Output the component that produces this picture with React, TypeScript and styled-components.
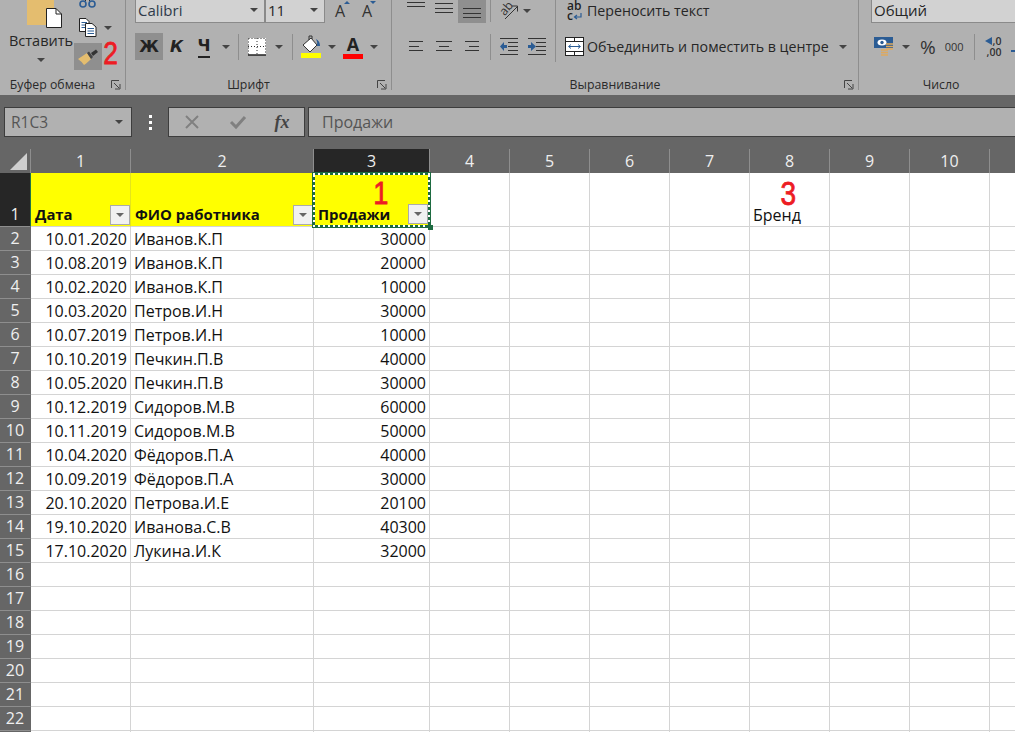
import React from 'react';
import styled, { createGlobalStyle } from 'styled-components';

const rows = [
  ['10.01.2020', 'Иванов.К.П', '30000'],
  ['10.08.2019', 'Иванов.К.П', '20000'],
  ['10.02.2020', 'Иванов.К.П', '10000'],
  ['10.03.2020', 'Петров.И.Н', '30000'],
  ['10.07.2019', 'Петров.И.Н', '10000'],
  ['10.10.2019', 'Печкин.П.В', '40000'],
  ['10.05.2020', 'Печкин.П.В', '30000'],
  ['10.12.2019', 'Сидоров.М.В', '60000'],
  ['10.11.2019', 'Сидоров.М.В', '50000'],
  ['10.04.2020', 'Фёдоров.П.А', '40000'],
  ['10.09.2019', 'Фёдоров.П.А', '30000'],
  ['20.10.2020', 'Петрова.И.Е', '20100'],
  ['19.10.2020', 'Иванова.С.В', '40300'],
  ['17.10.2020', 'Лукина.И.К', '32000'],
];

const columns = [1, 2, 3, 4, 5, 6, 7, 8, 9, 10, 11];

function App() {
  return (
    <Page>
      <GlobalStyle />
      <Ribbon>
        <Group $w={126}>
          <ClipboardBody>
            <PasteColumn>
              <PasteIcon />
              <PasteLabel>Вставить</PasteLabel>
              <PasteCaret />
            </PasteColumn>
            <ToolsColumn>
              <ScissorsIcon />
              <CopyRow>
                <CopyIcon />
                <Caret />
              </CopyRow>
              <ToolButton $w={28} $h={27} $active>
                <BrushIcon />
              </ToolButton>
            </ToolsColumn>
          </ClipboardBody>
          <Mark $left={102} $top={43} $size={31}>2</Mark>
          <GroupLabel $shift={-10}>Буфер обмена</GroupLabel>
          <Launcher />
        </Group>

        <Group $w={266}>
          <ToolRows $pad={9}>
            <ToolRow $h={24} $top>
              <SelectBox $w={130}>
                <SelectValue $blue>Calibri</SelectValue>
                <Caret />
              </SelectBox>
              <SelectBox $w={60}>
                <SelectValue>11</SelectValue>
                <Caret />
              </SelectBox>
              <Slot $w={28} $ml={1}>
                <GrowFont>A</GrowFont>
                <GrowArrow viewBox="0 0 8 4"><path d="M0 4 L4 0 L8 4 Z" fill="#2b5c94" /></GrowArrow>
              </Slot>
              <Slot $w={26}>
                <GrowFont>A</GrowFont>
                <GrowArrow viewBox="0 0 8 4"><path d="M0 0 L4 4 L8 0 Z" fill="#2b5c94" /></GrowArrow>
              </Slot>
            </ToolRow>
            <ToolRow $h={27} $mt={9}>
              <ToolButton $w={28} $h={27} $active><StyleLetter>Ж</StyleLetter></ToolButton>
              <Slot $w={27}><StyleLetter $italic>К</StyleLetter></Slot>
              <Slot $w={28}><StyleLetter $under>Ч</StyleLetter></Slot>
              <Slot $w={16}><Caret /></Slot>
              <Separator $ml={4} $mr={9} />
              <BordersIcon />
              <Slot $w={26}><Caret /></Slot>
              <Separator $mr={8} />
              <FillIcon />
              <Slot $w={22}><Caret /></Slot>
              <FontColor>
                <FontColorLetter>A</FontColorLetter>
              </FontColor>
              <Slot $w={22}><Caret /></Slot>
            </ToolRow>
          </ToolRows>
          <GroupLabel $shift={-10}>Шрифт</GroupLabel>
          <Launcher />
        </Group>

        <Group $w={467}>
          <ToolRows $pad={0}>
            <ToolRow $h={24} $top>
              <Slot $w={18} $ml={15}><LinesIcon widths={[18, 18, 18]} y={-8} /></Slot>
              <Slot $w={18} $ml={10}><LinesIcon widths={[18, 18, 18]} y={-2} /></Slot>
              <ActiveCorner>
                <LinesIcon widths={[18, 18, 18]} y={2} />
              </ActiveCorner>
              <Separator $ml={4} $mr={9} $h={22} />
              <OrientationIcon />
              <Slot $w={17}><Caret /></Slot>
              <Separator $ml={20} $mr={11} $h={62} />
              <WrapIcon />
              <RibbonText $ml={4}>Переносить текст</RibbonText>
            </ToolRow>
            <ToolRow $h={27} $mt={9}>
              <Slot $w={28} $ml={10}><LinesIcon widths={[14, 10, 14]} align="left" /></Slot>
              <Slot $w={28}><LinesIcon widths={[16, 10, 16]} align="center" /></Slot>
              <Slot $w={28}><LinesIcon widths={[14, 10, 14]} align="right" /></Slot>
              <Separator $ml={4} $mr={9} />
              <IndentIcon />
              <IndentIcon $ml={10} $reverse />
              <Slot $w={19} />
              <MergeIcon />
              <RibbonText $ml={3}>Объединить и поместить в центре</RibbonText>
              <Slot $w={28}><Caret /></Slot>
            </ToolRow>
          </ToolRows>
          <GroupLabel $shift={-10}>Выравнивание</GroupLabel>
          <Launcher />
        </Group>

        <NumberGroup>
          <ToolRows $pad={12}>
            <ToolRow $h={24} $top>
              <SelectBox $w={160}>
                <SelectValue>Общий</SelectValue>
              </SelectBox>
            </ToolRow>
            <ToolRow $h={27} $mt={9}>
              <MoneyIcon />
              <Slot $w={24}><Caret /></Slot>
              <Percent>%</Percent>
              <Thousands>000</Thousands>
              <Separator $ml={10} $mr={10} />
              <DecimalStack>
                <DecimalLine><DecimalArrow />,0</DecimalLine>
                <DecimalLine>,00</DecimalLine>
              </DecimalStack>
              <CutArrow />
            </ToolRow>
          </ToolRows>
          <GroupLabel $shift={4}>Число</GroupLabel>
        </NumberGroup>
      </Ribbon>

      <FormulaBand>
        <NameBox>
          <NameText>R1C3</NameText>
          <Caret />
        </NameBox>
        <Grip><i /><i /><i /></Grip>
        <FormulaButtons>
          <Slot $w={45}>
            <svg width="16" height="16" viewBox="0 0 16 16"><path d="M2 2 L14 14 M14 2 L2 14" stroke="#808080" strokeWidth="2" /></svg>
          </Slot>
          <Slot $w={47}>
            <svg width="18" height="16" viewBox="0 0 18 16"><path d="M2 8 L7 13 L16 3" fill="none" stroke="#808080" strokeWidth="3" /></svg>
          </Slot>
          <Slot $w={42}><FxText>fx</FxText></Slot>
        </FormulaButtons>
        <FormulaInput>Продажи</FormulaInput>
      </FormulaBand>

      <Sheet>
        <Corner>
          <svg width="17" height="17" viewBox="0 0 17 17"><path d="M0 17 L17 17 L17 0 Z" fill="#cfcfcf" /></svg>
        </Corner>
        {columns.map((c) => (
          <ColHead key={c} $active={c === 3}>{c <= 10 ? c : ''}</ColHead>
        ))}

        <RowHead $active>1</RowHead>
        <TitleCell>
          Дата<FilterButton />
        </TitleCell>
        <TitleCell>
          ФИО работника<FilterButton />
        </TitleCell>
        <TitleCell>
          Продажи<FilterButton $inset />
          <Mark $left={58} $top={9} $size={32}>1</Mark>
          <MarchingAnts />
        </TitleCell>
        {columns.slice(3).map((c) => (
          <Cell key={c}>
            {c === 8 && (
              <>
                <BrandText>Бренд</BrandText>
                <Mark $left={29} $top={9} $size={33}>3</Mark>
              </>
            )}
          </Cell>
        ))}

        {rows.map((r, i) => (
          <React.Fragment key={i}>
            <RowHead>{i + 2}</RowHead>
            <Cell $right>{r[0]}</Cell>
            <Cell>{r[1]}</Cell>
            <Cell $right>{r[2]}</Cell>
            {columns.slice(3).map((c) => <Cell key={c} />)}
          </React.Fragment>
        ))}

        {Array.from({ length: 8 }, (_, i) => (
          <React.Fragment key={i}>
            <RowHead>{i + 16 <= 22 ? i + 16 : ''}</RowHead>
            {columns.map((c) => <Cell key={c} />)}
          </React.Fragment>
        ))}
      </Sheet>
    </Page>
  );
}

/* ---- small drawings ---- */

function PasteIcon() {
  return (
    <PasteSvg width="36" height="28" viewBox="0 0 36 28">
      <rect x="0" y="0" width="27" height="25" fill="#e4bd6f" />
      <path d="M19.5 8.5 H29 L34.5 14 V27.5 H19.5 Z" fill="#fff" stroke="#222" />
      <path d="M29 8.5 V14 H34.5" fill="none" stroke="#222" />
    </PasteSvg>
  );
}

function ScissorsIcon() {
  return (
    <ScissorsSvg width="17" height="9" viewBox="0 0 17 9">
      <circle cx="4" cy="4" r="3" fill="none" stroke="#2b5c94" strokeWidth="1.6" />
      <circle cx="13" cy="4" r="3" fill="none" stroke="#2b5c94" strokeWidth="1.6" />
      <path d="M6 1 L7 0 M11 1 L10 0" stroke="#333" />
    </ScissorsSvg>
  );
}

function CopyIcon() {
  return (
    <svg width="18" height="19" viewBox="0 0 18 19">
      <path d="M0.5 0.5 H7 L10 3.5 V13.5 H0.5 Z" fill="#fff" stroke="#222" />
      <path d="M2.5 4.5 H8 M2.5 7 H8 M2.5 9.5 H8" stroke="#2b5c94" />
      <path d="M6.5 5.5 H13 L17 9 V18.5 H6.5 Z" fill="#fff" stroke="#222" />
      <path d="M8.5 10.5 H15 M8.5 13 H15 M8.5 15.5 H15" stroke="#2b5c94" />
    </svg>
  );
}

function BrushIcon() {
  return (
    <svg width="20" height="16" viewBox="0 0 20 16">
      <path d="M0 10 L9 4 L13 10 Q8 15 6 16 Q3 12 0 10 Z" fill="#e4bd6f" />
      <path d="M9 4 L13 10 L15 8 L11 2.5 Z" fill="#444" />
      <path d="M13 4 L18 0.5 L20 3 L15 7 Z" fill="#333" />
    </svg>
  );
}

function BordersIcon() {
  return (
    <svg width="18" height="18" viewBox="0 0 18 18">
      <rect x="0" y="0" width="18" height="17" fill="#fff" />
      <path d="M0.5 0.5 H17.5 V16.5 M0.5 0.5 V16.5 M9 0 V17 M0 8.5 H18" fill="none" stroke="#333" strokeDasharray="1 2" />
      <path d="M0 17 H18" stroke="#222" strokeWidth="1.5" />
    </svg>
  );
}

function FillIcon() {
  return (
    <svg width="20" height="24" viewBox="0 0 20 24">
      <path d="M2 10 L10 3 L16 10 L9 17 Z" fill="#fff" stroke="#333" />
      <path d="M8 5 V1 H11 V4" fill="none" stroke="#333" />
      <path d="M15 4 Q19 6 19 11 L16 11 Q17 7 15 4 Z" fill="#2b5c94" />
      <rect x="0" y="18" width="20" height="5" fill="#ffff00" />
    </svg>
  );
}

function OrientationIcon() {
  return (
    <OrientationSvg width="18" height="19" viewBox="0 0 18 19">
      <text x="0" y="11" fontFamily="Open Sans, sans-serif" fontSize="12" fill="#333" transform="rotate(-50 7 8)">ab</text>
      <path d="M5 18 L17 6 M12 5 H17.5 V10.5" fill="none" stroke="#333" />
    </OrientationSvg>
  );
}

function WrapIcon() {
  return (
    <WrapBox>
      <span>ab</span>
      <span>
        c<svg width="9" height="7" viewBox="0 0 9 7"><path d="M8 0 V4 H2 M4 2 L1.5 4 L4 6" fill="none" stroke="#2b5c94" strokeWidth="1.2" /></svg>
      </span>
    </WrapBox>
  );
}

function MergeIcon() {
  return (
    <svg width="19" height="19" viewBox="0 0 19 19">
      <rect x="0.5" y="0.5" width="18" height="18" fill="#fff" stroke="#222" />
      <path d="M0 4.5 H19 M0 14.5 H19 M9.5 0 V4.5 M9.5 14.5 V19" stroke="#222" />
      <path d="M4 9.5 H15 M6 7.5 L3.5 9.5 L6 11.5 M13 7.5 L15.5 9.5 L13 11.5" fill="none" stroke="#2b5c94" />
    </svg>
  );
}

function MoneyIcon() {
  return (
    <MoneySvg width="20" height="19" viewBox="0 0 20 19">
      <rect x="0" y="0" width="19" height="11" fill="#2b5c94" />
      <ellipse cx="8" cy="5.5" rx="4.5" ry="3" fill="#fff" />
      <circle cx="8" cy="5.5" r="1.7" fill="#2b5c94" />
      <path d="M12 7 H19 M12 9.5 H19 M12 12 H19 M7 13 H14 M7 15.5 H14 M7 18 H14" stroke="#dfa95c" strokeWidth="1.6" />
    </MoneySvg>
  );
}

function LinesIcon({ widths, align = 'left', y = 0 }: { widths: number[]; align?: string; y?: number }) {
  const w = Math.max(...widths);
  const step = 4.5;
  const h = Math.ceil(widths.length * step);
  return (
    <LinesSvg width={w} height={h} viewBox={`0 0 ${w} ${h}`} $y={y}>
      {widths.map((l, i) => {
        const x = align === 'left' ? 0 : align === 'right' ? w - l : (w - l) / 2;
        return <rect key={i} x={x} y={Math.round(i * step) + 1} width={l} height="1" fill="#333" />;
      })}
    </LinesSvg>
  );
}

function IndentIcon({ $ml = 0, $reverse = false }: { $ml?: number; $reverse?: boolean }) {
  return (
    <IndentSvg width="18" height="17" viewBox="0 0 18 17" $ml={$ml}>
      <path d="M0 0.5 H18 M8 4.5 H18 M8 8.5 H18 M8 12.5 H18 M0 16.5 H18" stroke="#333" />
      {$reverse ? (
        <path d="M0 7 H3 V4 L8 8.5 L3 13 V10 H0 Z" fill="#2b5c94" />
      ) : (
        <path d="M7 7 H4 V4 L0 8.5 L4 13 V10 H7 Z" fill="#2b5c94" />
      )}
    </IndentSvg>
  );
}

function Launcher() {
  return (
    <LauncherSvg width="10" height="10" viewBox="0 0 10 10">
      <path d="M0.5 8 V0.5 H8" fill="none" stroke="#444" />
      <path d="M3 3 L8 8 M9 4 V9 H4" fill="none" stroke="#444" />
    </LauncherSvg>
  );
}

/* ---- page ---- */

const GlobalStyle = createGlobalStyle`
  html, body {
    margin: 0;
    padding: 0;
    background: #fff;
    overflow: hidden;
  }
`;

const Page = styled.div`
  width: 1015px;
  height: 732px;
  overflow: hidden;
  font-family: "Open Sans", "Noto Sans", sans-serif;
`;

const Ribbon = styled.div`
  display: flex;
  height: 95px;
  padding-bottom: 5px;
  box-sizing: border-box;
  background: #b1b1b1;
  overflow: hidden;
`;

const Group = styled.div<{ $w: number }>`
  position: relative;
  flex: none;
  width: ${(p) => p.$w}px;
  display: flex;
  flex-direction: column;
  box-sizing: border-box;
  border-right: 1px solid #8e8e8e;
`;

const NumberGroup = styled.div`
  flex: 1;
  min-width: 0;
  display: flex;
  flex-direction: column;
`;

const GroupLabel = styled.div<{ $shift?: number }>`
  height: 12px;
  line-height: 12px;
  margin-top: auto;
  margin-bottom: -1px;
  text-align: center;
  font-size: 12.3px;
  color: #2a2a2a;
  transform: translateX(${(p) => p.$shift ?? 0}px);
`;

const LauncherSvg = styled.svg`
  position: absolute;
  right: 4px;
  bottom: 0;
`;

const ClipboardBody = styled.div`
  display: flex;
`;

const PasteColumn = styled.div`
  width: 74px;
  flex: none;
  display: flex;
  flex-direction: column;
  align-items: center;
`;

const PasteSvg = styled.svg`
  align-self: flex-start;
  margin-left: 27px;
`;

const PasteLabel = styled.div`
  margin: 4px 0 8px 8px;
  font-size: 14.5px;
  line-height: 18px;
  color: #262626;
`;

const ToolsColumn = styled.div`
  display: flex;
  flex-direction: column;
  align-items: flex-start;
`;

const ScissorsSvg = styled.svg`
  margin-left: 5px;
`;

const CopyRow = styled.div`
  display: flex;
  align-items: center;
  gap: 7px;
  margin: 9px 0 6px 5px;
`;

const ToolRows = styled.div<{ $pad: number }>`
  display: flex;
  flex-direction: column;
  padding-left: ${(p) => p.$pad}px;
`;

const ToolRow = styled.div<{ $h: number; $mt?: number; $top?: boolean }>`
  display: flex;
  align-items: center;
  box-sizing: border-box;
  height: ${(p) => p.$h}px;
  margin-top: ${(p) => p.$mt ?? 0}px;
  padding-bottom: ${(p) => (p.$top ? '3px' : '0')};
`;

const Slot = styled.div<{ $w: number; $ml?: number }>`
  position: relative;
  flex: none;
  width: ${(p) => p.$w}px;
  margin-left: ${(p) => p.$ml ?? 0}px;
  display: flex;
  align-items: center;
  justify-content: center;
`;

const ToolButton = styled.div<{ $w: number; $h: number; $active?: boolean }>`
  flex: none;
  width: ${(p) => p.$w}px;
  height: ${(p) => p.$h}px;
  display: flex;
  align-items: center;
  justify-content: center;
  background: ${(p) => (p.$active ? '#8f8f8f' : 'transparent')};
`;

const ActiveCorner = styled.div`
  flex: none;
  align-self: flex-start;
  width: 28px;
  height: 23px;
  margin-left: 5px;
  display: flex;
  align-items: center;
  justify-content: center;
  background: #8f8f8f;
`;

const SelectBox = styled.div<{ $w: number }>`
  flex: none;
  align-self: flex-start;
  width: ${(p) => p.$w}px;
  height: 23px;
  box-sizing: border-box;
  display: flex;
  align-items: center;
  justify-content: space-between;
  padding: 0 6px 2px 2px;
  background: #d2d2d2;
  border: 1px solid #8a8a8a;
  border-top: none;
`;

const SelectValue = styled.span<{ $blue?: boolean }>`
  font-size: 15px;
  color: ${(p) => (p.$blue ? '#2f3b4a' : '#262626')};
`;

const Caret = styled.span`
  flex: none;
  width: 0;
  height: 0;
  border-left: 4px solid transparent;
  border-right: 4px solid transparent;
  border-top: 4px solid #444;
`;

const PasteCaret = styled(Caret)`
  margin-left: 8px;
`;

const Separator = styled.div<{ $ml?: number; $mr?: number; $h?: number }>`
  flex: none;
  align-self: ${(p) => (p.$h ? 'flex-start' : 'center')};
  width: 1px;
  height: ${(p) => p.$h ?? 26}px;
  margin-left: ${(p) => p.$ml ?? 0}px;
  margin-right: ${(p) => p.$mr ?? 0}px;
  background: #8e8e8e;
`;

const GrowFont = styled.span`
  font-size: 16px;
  line-height: 20px;
  color: #333;
`;

const GrowArrow = styled.svg`
  position: absolute;
  top: 0;
  right: 3px;
  width: 8px;
  height: 3px;
`;

const StyleLetter = styled.span<{ $italic?: boolean; $under?: boolean }>`
  font-family: "DejaVu Sans", sans-serif;
  font-size: 16px;
  font-weight: 700;
  line-height: 20px;
  color: #222;
  font-style: ${(p) => (p.$italic ? 'italic' : 'normal')};
  border-bottom: ${(p) => (p.$under ? '2px solid #222' : 'none')};
`;

const FontColor = styled.div`
  flex: none;
  width: 20px;
  height: 24px;
  box-sizing: border-box;
  display: flex;
  justify-content: center;
  border-bottom: 5px solid #f00;
`;

const FontColorLetter = styled.span`
  font-size: 18px;
  font-weight: 700;
  line-height: 18px;
  color: #222;
`;

const LinesSvg = styled.svg<{ $y: number }>`
  display: block;
  transform: translateY(${(p) => p.$y}px);
`;

const OrientationSvg = styled.svg`
  flex: none;
`;

const IndentSvg = styled.svg<{ $ml: number }>`
  flex: none;
  margin-left: ${(p) => p.$ml}px;
`;

const WrapBox = styled.div`
  flex: none;
  width: 16px;
  display: flex;
  flex-direction: column;
  font-size: 12px;
  font-weight: 600;
  line-height: 10px;
  color: #222;
`;

const RibbonText = styled.span<{ $ml?: number }>`
  margin-left: ${(p) => p.$ml ?? 0}px;
  font-size: 14.2px;
  white-space: nowrap;
  color: #262626;
`;

const MoneySvg = styled.svg`
  flex: none;
  margin-left: 3px;
`;

const Percent = styled.span`
  width: 18px;
  margin-left: 2px;
  font-size: 19px;
  color: #333;
`;

const Thousands = styled.span`
  margin-left: 9px;
  font-size: 11px;
  color: #333;
`;

const DecimalStack = styled.div`
  display: flex;
  flex-direction: column;
  font-size: 10.5px;
  font-weight: 600;
  line-height: 11px;
  color: #333;
  text-align: right;
`;

const DecimalLine = styled.div`
  display: flex;
  align-items: center;
  justify-content: flex-end;
`;

const DecimalArrow = styled.span`
  width: 0;
  height: 0;
  margin-right: 1px;
  border-top: 4px solid transparent;
  border-bottom: 4px solid transparent;
  border-right: 7px solid #2b5c94;
`;

const CutArrow = styled.span`
  width: 6px;
  height: 2px;
  margin: 8px 0 0 10px;
  background: #2b5c94;
`;

const FormulaBand = styled.div`
  height: 54px;
  box-sizing: border-box;
  padding: 12px 0 12px 4px;
  display: flex;
  background: #666;
`;

const barBox = `
  height: 30px;
  box-sizing: border-box;
  background: #b1b1b1;
  border: 1px solid #3d3d3d;
  display: flex;
  align-items: center;
`;

const NameBox = styled.div`
  ${barBox}
  width: 128px;
  flex: none;
  justify-content: space-between;
  padding: 0 8px 0 6px;
`;

const NameText = styled.span`
  font-size: 15.5px;
  color: #555;
`;

const Grip = styled.div`
  width: 36px;
  flex: none;
  display: flex;
  flex-direction: column;
  align-items: center;
  justify-content: center;
  gap: 3px;

  i {
    width: 3px;
    height: 3px;
    background: #fff;
  }
`;

const FormulaButtons = styled.div`
  ${barBox}
  width: 137px;
  flex: none;
`;

const FxText = styled.span`
  font-family: "Liberation Serif", serif;
  font-size: 18px;
  font-style: italic;
  font-weight: 700;
  color: #444;
`;

const FormulaInput = styled.div`
  ${barBox}
  flex: 1;
  margin-left: 3px;
  padding-left: 13px;
  border-right: none;
  font-size: 16px;
  color: #555;
`;

const Sheet = styled.div`
  display: grid;
  grid-template-columns: 31px 100px 183px 116px repeat(8, 80px);
  grid-template-rows: 24px 54px repeat(30, 24px);
  width: 1070px;
`;

const Corner = styled.div`
  background: #666;
  display: flex;
  align-items: center;
  justify-content: flex-end;
  padding-right: 3px;
  box-sizing: border-box;
  border-right: 1px solid #8e8e8e;
`;

const ColHead = styled.div<{ $active?: boolean }>`
  background: ${(p) => (p.$active ? '#262626' : '#666')};
  border-right: 1px solid #8e8e8e;
  box-sizing: border-box;
  display: flex;
  align-items: center;
  justify-content: center;
  font-size: 16px;
  color: #efefef;
`;

const RowHead = styled.div<{ $active?: boolean }>`
  background: ${(p) => (p.$active ? '#262626' : '#666')};
  border-bottom: 1px solid #8e8e8e;
  border-right: 1px solid ${(p) => (p.$active ? '#217346' : '#666')};
  box-sizing: border-box;
  display: flex;
  align-items: flex-end;
  justify-content: center;
  padding-bottom: 1px;
  font-size: 16px;
  line-height: 21px;
  color: #efefef;
`;

const Cell = styled.div<{ $right?: boolean }>`
  position: relative;
  box-sizing: border-box;
  border-right: 1px solid #d4d4d4;
  border-bottom: 1px solid #d4d4d4;
  padding: 0 3px;
  display: flex;
  align-items: flex-end;
  justify-content: ${(p) => (p.$right ? 'flex-end' : 'flex-start')};
  font-size: 16px;
  line-height: 22px;
  color: #111;
  white-space: nowrap;
`;

const TitleCell = styled(Cell)`
  background: #ffff00;
  justify-content: space-between;
  padding: 0 0 1px 4px;
  border-right-color: #e4e41c;
  font-weight: 700;
  font-size: 14.9px;
`;

const BrandText = styled.span`
  margin-bottom: 0;
`;

const FilterButton = styled.span<{ $inset?: boolean }>`
  flex: none;
  width: 20px;
  height: 20px;
  margin: 0 ${(p) => (p.$inset ? '1px 1px 0' : '0 0 0')};
  box-sizing: border-box;
  border: 1px solid #ababab;
  background: #f1f1f1;
  display: flex;
  align-items: center;
  justify-content: center;

  &::after {
    content: "";
    border-left: 4px solid transparent;
    border-right: 4px solid transparent;
    border-top: 4px solid #666;
  }
`;

const MarchingAnts = styled.span`
  position: absolute;
  inset: -1px -2px -2px -2px;
  border: 3px solid #1e6b41;
  z-index: 2;

  &::before {
    content: "";
    position: absolute;
    inset: -2px;
    background:
      repeating-linear-gradient(90deg, #fff 0 2px, transparent 2px 5px) top left / 100% 2px no-repeat,
      repeating-linear-gradient(90deg, #fff 0 2px, transparent 2px 5px) bottom left / 100% 2px no-repeat,
      repeating-linear-gradient(0deg, #fff 0 2px, transparent 2px 5px) top left / 2px 100% no-repeat,
      repeating-linear-gradient(0deg, #fff 0 2px, transparent 2px 5px) top right / 2px 100% no-repeat;
  }

  &::after {
    content: "";
    position: absolute;
    right: -5px;
    bottom: -5px;
    width: 5px;
    height: 5px;
    background: #1e6b41;
  }
`;

const Mark = styled.span<{ $left: number; $top: number; $size: number }>`
  position: absolute;
  left: ${(p) => p.$left}px;
  top: ${(p) => p.$top}px;
  z-index: 3;
  font-family: "Liberation Sans", sans-serif;
  font-size: ${(p) => p.$size}px;
  font-weight: 400;
  line-height: 0.72;
  color: #ed1c24;
  -webkit-text-stroke: 0.8px #ed1c24;
  transform: scaleX(0.85);
`;

export default App;
